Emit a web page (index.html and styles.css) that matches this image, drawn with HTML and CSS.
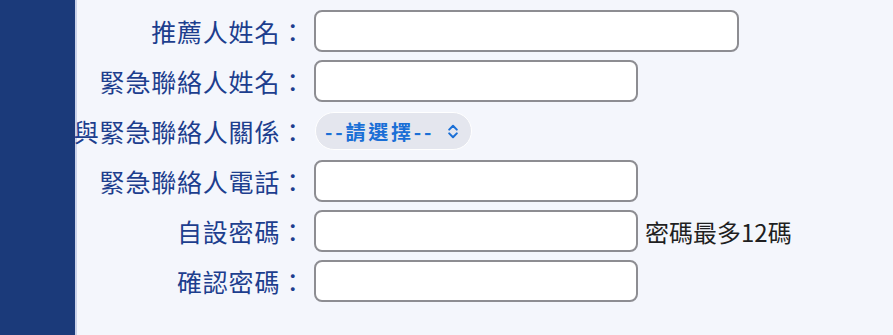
FILE: index.html
```html
<!DOCTYPE html>
<html lang="zh-Hant">
<head>
<meta charset="utf-8">
<title>表單</title>
<link rel="stylesheet" href="styles.css">
</head>
<body>
<div class="page">
  <aside class="sidebar"></aside>
  <main class="main">
    <form class="form">
      <div class="row">
        <label class="label"><span>推薦人姓名：</span></label>
        <input class="field field-wide" type="text">
      </div>
      <div class="row">
        <label class="label"><span>緊急聯絡人姓名：</span></label>
        <input class="field" type="text">
      </div>
      <div class="row">
        <label class="label"><span>與緊急聯絡人關係：</span></label>
        <span class="select-wrap">
          <select class="select">
            <option>--請選擇--</option>
          </select>
          <svg class="chevron" width="10" height="15" viewBox="0 0 10 15" aria-hidden="true">
            <path d="M1.2 5.6 L5 1.8 L8.8 5.6 M1.2 9.4 L5 13.2 L8.8 9.4" fill="none" stroke="#1a6fd6" stroke-width="2" stroke-linecap="round" stroke-linejoin="round"/>
          </svg>
        </span>
      </div>
      <div class="row">
        <label class="label"><span>緊急聯絡人電話：</span></label>
        <input class="field" type="text">
      </div>
      <div class="row">
        <label class="label"><span>自設密碼：</span></label>
        <input class="field" type="password">
        <span class="hint">密碼最多12碼</span>
      </div>
      <div class="row">
        <label class="label"><span>確認密碼：</span></label>
        <input class="field" type="password">
      </div>
    </form>
  </main>
</div>
</body>
</html>
```

FILE: styles.css
```css
html, body {
  margin: 0;
  padding: 0;
  height: 100%;
}
body {
  background: #f4f6fc;
  font-family: "Noto Sans CJK TC", "Noto Sans", sans-serif;
}
.page {
  display: flex;
  min-height: 335px;
}
.sidebar {
  width: 75px;
  flex: none;
  background: #1b3a7a;
  border-right: 2px solid #cbd3ea;
}
.main {
  flex: 1;
  position: relative;
  z-index: 1;
}
.form {
  display: flex;
  flex-direction: column;
  gap: 8px;
  padding-top: 10px;
}
.row {
  display: flex;
  align-items: center;
  height: 42px;
}
.label {
  flex: none;
  width: 229px;
  display: flex;
  justify-content: flex-end;
  white-space: nowrap;
  font-size: 25px;
  font-weight: 400;
  letter-spacing: 0.8px;
  line-height: 30px;
  color: #1d3e8e;
  margin-right: 8px;
}
.label span {
  flex: none;
}
.field {
  box-sizing: border-box;
  width: 324px;
  height: 42px;
  border: 2px solid #8d8d92;
  border-radius: 8px;
  background: #fff;
  margin: 0;
  padding: 0 8px;
  font-size: 18px;
  outline: none;
}
.field-wide {
  width: 425px;
}
.select-wrap {
  position: relative;
  display: inline-block;
  margin-left: 1px;
}
.select {
  appearance: none;
  -webkit-appearance: none;
  box-sizing: border-box;
  width: 157px;
  height: 38px;
  margin: 0;
  padding: 0 0 0 9px;
  border: 1.5px solid #ffffff;
  border-radius: 19px;
  background: #e4e6ee;
  color: #1a6fd6;
  font-family: "Noto Sans CJK TC", "Noto Sans", sans-serif;
  font-size: 20px;
  font-weight: 700;
  letter-spacing: 2.8px;
  outline: none;
}
.chevron {
  position: absolute;
  left: 133px;
  top: 12px;
  pointer-events: none;
}
.hint {
  margin-left: 7px;
  font-size: 24px;
  color: #1f1f22;
  white-space: nowrap;
}
```
